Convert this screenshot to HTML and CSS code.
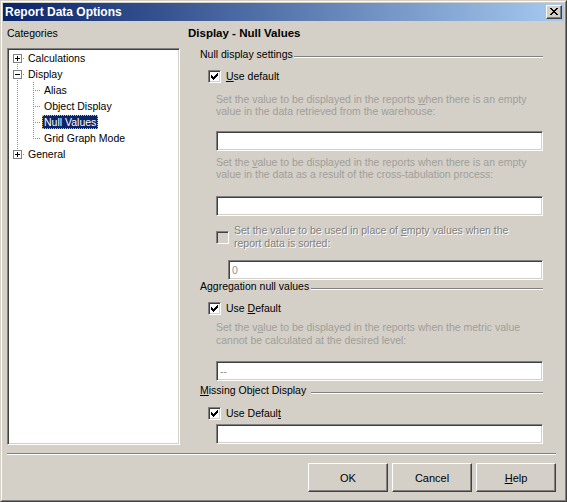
FILE: index.html
```html
<!DOCTYPE html>
<html>
<head>
<meta charset="utf-8">
<title>Report Data Options</title>
<link rel="stylesheet" href="styles.css">
</head>
<body>
<div class="win">
  <div class="frame">
    <div class="titlebar">
      <span class="title">Report Data Options</span>
      <span class="closebtn"><svg width="8" height="7" viewBox="0 0 8 7" shape-rendering="crispEdges"><path fill="#000" d="M0 0h2v1h-2z M6 0h2v1h-2z M1 1h2v1h-2z M5 1h2v1h-2z M2 2h4v1h-4z M3 3h2v1h-2z M2 4h4v1h-4z M1 5h2v1h-2z M5 5h2v1h-2z M0 6h2v1h-2z M6 6h2v1h-2z"/></svg></span>
    </div>
    <div class="main">
      <div class="leftcol">
        <div class="lbl">Categories</div>
        <div class="tree sunken">
          <div class="row"><span class="c first"><svg class="exp" width="9" height="9" viewBox="0 0 9 9" shape-rendering="crispEdges"><rect x="0.5" y="0.5" width="8" height="8" fill="#fff" stroke="#808080"/><path d="M2 4h5v1h-5z M4 2h1v5h-1z" fill="#000"/></svg></span><span class="item">Calculations</span></div>
          <div class="row"><span class="c tee"><svg class="exp" width="9" height="9" viewBox="0 0 9 9" shape-rendering="crispEdges"><rect x="0.5" y="0.5" width="8" height="8" fill="#fff" stroke="#808080"/><path d="M2 4h5v1h-5z" fill="#000"/></svg></span><span class="item">Display</span></div>
          <div class="row"><span class="c vert"></span><span class="c tee"></span><span class="item">Alias</span></div>
          <div class="row"><span class="c vert"></span><span class="c tee"></span><span class="item">Object Display</span></div>
          <div class="row"><span class="c vert"></span><span class="c tee"></span><span class="item sel">Null Values</span></div>
          <div class="row"><span class="c vert"></span><span class="c last"></span><span class="item">Grid Graph Mode</span></div>
          <div class="row"><span class="c last"><svg class="exp" width="9" height="9" viewBox="0 0 9 9" shape-rendering="crispEdges"><rect x="0.5" y="0.5" width="8" height="8" fill="#fff" stroke="#808080"/><path d="M2 4h5v1h-5z M4 2h1v5h-1z" fill="#000"/></svg></span><span class="item">General</span></div>
        </div>
      </div>
      <div class="panel">
        <div class="heading">Display - Null Values</div>

        <div class="grp g1"><span class="glabel">Null display settings</span><span class="gline"></span></div>
        <div class="chkrow r1"><span class="chk"><svg width="7" height="7" viewBox="0 0 7 7" shape-rendering="crispEdges"><path fill="#000" d="M6 0h1v1h-1z M5 1h2v1h-2z M0 2h1v1h-1z M4 2h3v1h-3z M0 3h2v1h-2z M3 3h3v1h-3z M0 4h5v1h-5z M1 5h3v1h-3z M2 6h1v1h-1z"/></svg></span><span><u>U</u>se default</span></div>
        <div class="desc d1">Set the value to be displayed in the reports <u>w</u>hen there is an empty<br>value in the data retrieved from the warehouse:</div>
        <div class="edit e1"></div>
        <div class="desc d2">Set the <u>v</u>alue to be displayed in the reports when there is an empty<br>value in the data as a result of the cross-tabulation process:</div>
        <div class="edit e2"></div>
        <div class="chkrow r2"><span class="chk off"></span><span class="dlabel">Set the value to be used in place of <u>e</u>mpty values when the<br>report data is sorted:</span></div>
        <div class="edit e3"><span class="val">0</span></div>

        <div class="grp g2"><span class="glabel fixed">Aggregation null values</span><span class="gline"></span></div>
        <div class="chkrow r3"><span class="chk"><svg width="7" height="7" viewBox="0 0 7 7" shape-rendering="crispEdges"><path fill="#000" d="M6 0h1v1h-1z M5 1h2v1h-2z M0 2h1v1h-1z M4 2h3v1h-3z M0 3h2v1h-2z M3 3h3v1h-3z M0 4h5v1h-5z M1 5h3v1h-3z M2 6h1v1h-1z"/></svg></span><span>Use <u>D</u>efault</span></div>
        <div class="desc d3">Set the v<u>a</u>lue to be displayed in the reports when the metric value<br>cannot be calculated at the desired level:</div>
        <div class="edit e4"><span class="val">--</span></div>

        <div class="grp g3"><span class="glabel fixed"><u>M</u>issing Object Display</span><span class="gline"></span></div>
        <div class="chkrow r4"><span class="chk"><svg width="7" height="7" viewBox="0 0 7 7" shape-rendering="crispEdges"><path fill="#000" d="M6 0h1v1h-1z M5 1h2v1h-2z M0 2h1v1h-1z M4 2h3v1h-3z M0 3h2v1h-2z M3 3h3v1h-3z M0 4h5v1h-5z M1 5h3v1h-3z M2 6h1v1h-1z"/></svg></span><span>Use Defaul<u>t</u></span></div>
        <div class="edit e5"></div>
      </div>
    </div>
    <div class="footer">
      <div class="sep"></div>
      <div class="buttons">
        <span class="btn">OK</span>
        <span class="btn">Cancel</span>
        <span class="btn"><u>H</u>elp</span>
      </div>
    </div>
  </div>
</div>
</body>
</html>
```
FILE: styles.css
```css
html, body {
  margin: 0;
  padding: 0;
  background: #d4d0c8;
}
body {
  font-family: "Liberation Sans", Arial, sans-serif;
  font-size: 10.5px;
  color: #000;
}
u { text-decoration: underline; text-underline-offset: 1px; }

.win {
  width: 567px;
  height: 502px;
  box-sizing: border-box;
  border: 1px solid;
  border-color: #d4d0c8 #404040 #404040 #d4d0c8;
  background: #d4d0c8;
}
.frame {
  height: 100%;
  box-sizing: border-box;
  border: 1px solid;
  border-color: #ffffff #808080 #808080 #ffffff;
  padding: 1px;
  display: flex;
  flex-direction: column;
}

/* title bar */
.titlebar {
  height: 18px;
  flex: none;
  display: flex;
  align-items: center;
  justify-content: space-between;
  padding: 0 2px;
  background: linear-gradient(to right, #0a246a, #a6caf0);
}
.title {
  color: #fff;
  font-weight: bold;
  font-size: 12px;
  line-height: 18px;
}
.closebtn {
  width: 16px;
  height: 14px;
  box-sizing: border-box;
  background: #d4d0c8;
  border: 1px solid;
  border-color: #ffffff #404040 #404040 #ffffff;
  box-shadow: inset -1px -1px 0 #808080;
  display: flex;
  align-items: center;
  justify-content: center;
  padding-bottom: 1px;
}
.closebtn svg { display: block; }

/* main area */
.main {
  flex: 1;
  display: flex;
  gap: 8px;
  padding: 6px 0 8px 4px;
  min-height: 0;
}
.leftcol {
  width: 173px;
  flex: none;
  display: flex;
  flex-direction: column;
}
.lbl { line-height: 13px; height: 13px; }

.sunken {
  box-sizing: border-box;
  border: 1px solid;
  border-color: #808080 #ffffff #ffffff #808080;
  box-shadow: inset 1px 1px 0 #404040, inset -1px -1px 0 #d4d0c8;
  background: #fff;
}
.tree {
  margin-top: 8px;
  flex: 1;
  padding: 1px;
}

/* tree rows */
.row {
  height: 16px;
  display: flex;
  align-items: center;
}
.c {
  width: 16px;
  height: 16px;
  flex: none;
  box-sizing: border-box;
  padding: 4px 0 0 4px;
  background-repeat: no-repeat;
  --dv: repeating-linear-gradient(to bottom, #909090 0 1px, transparent 1px 2px);
  --dh: repeating-linear-gradient(to right, #909090 0 1px, transparent 1px 2px);
}
.c .exp { display: block; }
.c.vert {
  background-image: var(--dv);
  background-size: 1px 16px;
  background-position: 8px 0;
}
.c.tee {
  background-image: var(--dv), var(--dh);
  background-size: 1px 16px, 8px 1px;
  background-position: 8px 0, 8px 8px;
}
.c.first {
  background-image: var(--dv), var(--dh);
  background-size: 1px 8px, 8px 1px;
  background-position: 8px 8px, 8px 8px;
}
.c.last {
  background-image: var(--dv), var(--dh);
  background-size: 1px 9px, 8px 1px;
  background-position: 8px 0, 8px 8px;
}
.item {
  margin-left: 1px;
  padding: 0 2px;
  line-height: 14px;
  height: 14px;
  white-space: nowrap;
}
.item.sel {
  background: #0a246a;
  color: #fff;
  outline: 1px dotted #d8c070;
  outline-offset: -1px;
}

/* right panel */
.panel {
  width: 355px;
  flex: none;
  display: flex;
  flex-direction: column;
}
.heading {
  font-weight: bold;
  font-size: 11.5px;
  line-height: 13px;
  height: 13px;
}
.grp {
  display: flex;
  height: 13px;
  line-height: 13px;
  margin-left: 12px;
}
.glabel { white-space: nowrap; }
.glabel.fixed { width: 110px; flex: none; }
.gline {
  flex: 1;
  align-self: flex-end;
  margin: 0 0 3px 1px;
  border-top: 1px solid #808080;
  border-bottom: 1px solid #ffffff;
}
.g1 { margin-top: 8px; }
.g2 { margin-top: 0; }
.g3 { margin-top: 3px; }

.chkrow {
  display: flex;
  align-items: center;
  gap: 5px;
  line-height: 13px;
  margin-left: 20px;
}
.chk {
  width: 13px;
  height: 13px;
  flex: none;
  box-sizing: border-box;
  border: 1px solid;
  border-color: #808080 #ffffff #ffffff #808080;
  box-shadow: inset 1px 1px 0 #404040, inset -1px -1px 0 #d4d0c8;
  background: #fff;
  padding: 2px 0 0 2px;
}
.chk svg { display: block; }
.chk.off { background: #d4d0c8; }
.r1 { margin-top: 9px; }
.r2 { margin-top: 8px; margin-left: 28px; }
.r3 { margin-top: 9px; }
.r4 { margin-top: 10px; }
.dlabel {
  color: #808080;
  text-shadow: 1px 1px 0 #ffffff;
  white-space: nowrap;
}

.desc {
  color: #a09e98;
  margin-left: 28px;
  line-height: 12px;
  white-space: nowrap;
}
.d1 { margin-top: 10px; }
.d2 { margin-top: 5px; }
.d3 { margin-top: 6px; line-height: 13px; }

.edit {
  height: 20px;
  width: 327px;
  margin-left: 28px;
  box-sizing: border-box;
  border: 1px solid;
  border-color: #808080 #ffffff #ffffff #808080;
  box-shadow: inset 1px 1px 0 #404040, inset -1px -1px 0 #d4d0c8;
  background: #fff;
  padding: 0 3px;
  display: flex;
  align-items: center;
}
.val { color: #909090; }
.e1 { margin-top: 14px; }
.e2 { margin-top: 16px; }
.e3 { margin-top: 10px; margin-left: 40px; width: 315px; }
.e4 { margin-top: 14px; }
.e5 { margin-top: 4px; }

/* footer */
.footer {
  flex: none;
  padding-bottom: 7px;
}
.sep {
  margin: 0 8px 0 4px;
  border-top: 1px solid #808080;
  border-bottom: 1px solid #ffffff;
}
.buttons {
  display: flex;
  justify-content: flex-end;
  gap: 4px;
  margin-top: 8px;
  padding-right: 8px;
}
.btn {
  width: 80px;
  height: 29px;
  box-sizing: border-box;
  border: 1px solid;
  border-color: #ffffff #404040 #404040 #ffffff;
  box-shadow: inset -1px -1px 0 #808080;
  display: flex;
  align-items: center;
  justify-content: center;
  font-size: 11px;
}
```
